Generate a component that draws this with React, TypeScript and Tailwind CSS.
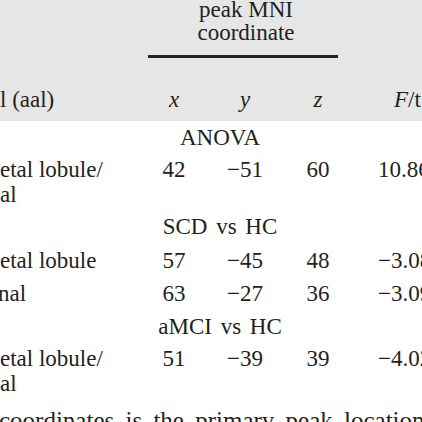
// Cropped results table: peak MNI coordinates per contrast

const rows = [
  { type: "group", label: "ANOVA", gap: "mt-[4px]" },
  { type: "data", lines: ["etal lobule/", "al"], x: "42", y: "−51", z: "60", f: "10.86", gap: "mt-[7px]" },
  { type: "group", label: "SCD vs HC", gap: "mt-[7px]" },
  { type: "data", lines: ["etal lobule"], x: "57", y: "−45", z: "48", f: "−3.08", gap: "mt-[9px]" },
  { type: "data", lines: ["nal"], x: "63", y: "−27", z: "36", f: "−3.09", gap: "mt-[8px]", shift: true },
  { type: "group", label: "aMCI vs HC", gap: "mt-[8px]" },
  { type: "data", lines: ["etal lobule/", "al"], x: "51", y: "−39", z: "39", f: "−4.02", gap: "mt-[7px]" },
] as const

const cols = "grid grid-cols-[148px_52px_90px_56px_1fr]"

export default function App() {
  return (
    <div
      className="w-[422px] h-[422px] overflow-hidden bg-white text-[23px] leading-[25px] text-[#231f20]"
      style={{ fontFamily: '"Liberation Serif", "Times New Roman", serif' }}
    >
      {/* header */}
      <div className="h-[121px] bg-[#e6e6e6] flex flex-col">
        <div className="-mt-[2px] ml-[151px] w-[190px] text-center leading-[23px]">
          <div>peak MNI</div>
          <div>coordinate</div>
        </div>
        <div className="mt-[11px] ml-[148px] w-[190px] h-[3px] bg-[#231f20]" />
        <div className={`${cols} mt-[29px] whitespace-nowrap`}>
          <div>l (aal)</div>
          <div className="text-center italic">x</div>
          <div className="text-center italic">y</div>
          <div className="text-center italic">z</div>
          <div className="pl-[48px]">
            <span className="italic">F</span>/t
          </div>
        </div>
      </div>

      {/* body */}
      {rows.map((r, i) =>
        r.type === "group" ? (
          <div key={i} className={`${r.gap} ml-[120px] w-[200px] text-center whitespace-nowrap [word-spacing:3px]`}>
            {r.label}
          </div>
        ) : (
          <div key={i} className={`${cols} ${r.gap} whitespace-nowrap`}>
            <div className={"shift" in r ? "-ml-[2px]" : ""}>
              {r.lines.map((l) => (
                <div key={l}>{l}</div>
              ))}
            </div>
            <div className="text-center">{r.x}</div>
            <div className="text-center">{r.y}</div>
            <div className="text-center">{r.z}</div>
            <div className="pl-[32px]">{r.f}</div>
          </div>
        )
      )}

      {/* footnote */}
      <div className="mt-[10px] -ml-[1px] text-[25px] leading-[30px] whitespace-nowrap [word-spacing:5px]">
        coordinates is the primary peak location
      </div>
    </div>
  )
}
